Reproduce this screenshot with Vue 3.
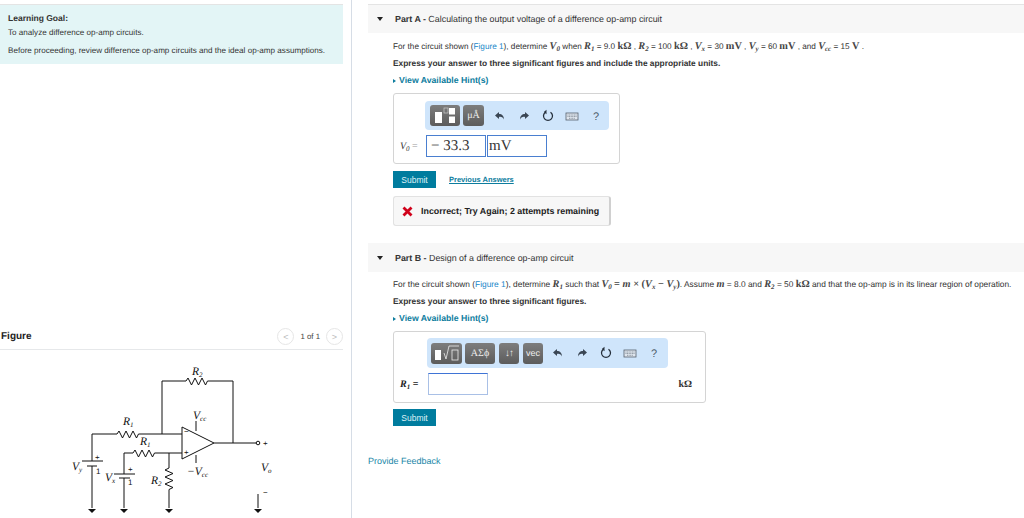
<template>
  <div class="page">
    <aside class="left">
      <section class="goal">
        <p class="goal-title">Learning Goal:</p>
        <p class="goal-one">To analyze difference op-amp circuits.</p>
        <p class="goal-two">Before proceeding, review difference op-amp circuits and the ideal op-amp assumptions.</p>
      </section>
      <div class="figure-head">
        <strong>Figure</strong>
        <div class="pager">
          <span class="pager-btn">&lt;</span>
          <span class="pager-text">1 of 1</span>
          <span class="pager-btn">&gt;</span>
        </div>
      </div>
      <svg class="circuit" width="220" height="163" viewBox="60 355 220 163">
        <g fill="none" stroke="#111" stroke-width="1">
          <path d="M162 434V381H186l2-3 3.500 7 3.500-7 3.500 7 3.500-7 3.500 7 2-4H233V443" />
          <path d="M92 461V434H117l2-3 3.500 7 3.500-7 3.500 7 3.500-7 3.500 7 2-4H182" />
          <path d="M124 474V453H133l2-3 3.500 7 3.500-7 3.500 7 3.500-7 3.500 7 2-4H182" />
          <path d="M169 453V468l-4 2 8 3.500-8 3.500 8 3.500-8 3.500 8 3.500-4 2V508" />
          <path d="M82 461H103M87 466H97M92 466V508" />
          <path d="M114 474H135M119 478H130M124 478V508" />
          <path d="M182 427V459L214 443Z" />
          <path d="M196 421V431M196 455V463M214 443H256" />
          <path d="M258 494V508" />
          <circle cx="258" cy="443" r="1.800" />
        </g>
        <g fill="#111">
          <path d="M88 509h8l-4 4zM120 509h8l-4 4zM165 509h8l-4 4zM254 509h8l-4 4z" />
        </g>
        <g class="serif-it">
          <text x="192" y="375">R<tspan class="sub" dy="2">2</tspan></text>
          <text x="123" y="425">R<tspan class="sub" dy="2">1</tspan></text>
          <text x="140" y="445">R<tspan class="sub" dy="2">1</tspan></text>
          <text x="151" y="484">R<tspan class="sub" dy="2">2</tspan></text>
          <text x="193" y="419">V<tspan class="sub" dy="2">cc</tspan></text>
          <text x="187" y="475">−V<tspan class="sub" dy="2">cc</tspan></text>
          <text x="72" y="470">V<tspan class="sub" dy="2">y</tspan></text>
          <text x="105" y="481">V<tspan class="sub" dy="2">x</tspan></text>
          <text x="261" y="471">V<tspan class="sub" dy="2">o</tspan></text>
        </g>
        <g class="marks">
          <text x="184" y="434">−</text>
          <text x="184" y="455">+</text>
          <text x="95" y="460">+</text>
          <text x="128" y="472">+</text>
          <text x="96" y="474">1</text>
          <text x="128" y="485">1</text>
          <text x="263" y="446">+</text>
          <text x="263" y="495">−</text>
        </g>
      </svg>
    </aside>

    <main class="right">
      <header class="part-head">
        <span class="caret"></span>
        <span><b>Part A -</b> Calculating the output voltage of a difference op-amp circuit</span>
      </header>
      <div class="part-body part-body-a">
        <p class="line">
          For the circuit shown (<span class="link">Figure 1</span>), determine
          <i class="m">V<sub>0</sub></i> when <i class="m">R<sub>1</sub></i> = 9.0 <span class="u">kΩ</span> ,
          <i class="m">R<sub>2</sub></i> = 100 <span class="u">kΩ</span> ,
          <i class="m">V<sub>x</sub></i> = 30 <span class="u">mV</span> ,
          <i class="m">V<sub>y</sub></i> = 60 <span class="u">mV</span> , and
          <i class="m">V<sub>cc</sub></i> = 15 <span class="u">V</span> .
        </p>
        <p class="line strong">Express your answer to three significant figures and include the appropriate units.</p>
        <p class="line hint"><span class="hint-caret"></span>View Available Hint(s)</p>

        <div class="answer answer-a">
          <div class="toolbar toolbar-a">
            <span class="tool tool-wide">
              <svg width="22" height="17" viewBox="0 0 22 17">
                <rect x="1" y="5" width="7" height="11" fill="#fff" />
                <rect x="10" y="1" width="4" height="5" fill="none" stroke="#ccc" stroke-width=".7" />
                <rect x="15" y="1" width="6" height="6.500" fill="#fff" />
                <rect x="15" y="9.500" width="6" height="6.500" fill="#fff" />
              </svg>
            </span>
            <span class="tool tool-unit">μÅ</span>
            <span class="icons icons-a">
              <svg v-for="i in icons" :key="i.id" width="14" height="14" viewBox="0 0 14 14" v-html="i.body"></svg>
            </span>
          </div>
          <div class="eq-row">
            <span class="eq-label"><i>V<sub>0</sub></i> <em>=</em></span>
            <span class="box box-value">− 33.3</span>
            <span class="box box-unit">mV</span>
          </div>
        </div>

        <div class="submit-row">
          <button class="submit">Submit</button>
          <span class="prev">Previous Answers</span>
        </div>

        <div class="feedback">
          <svg width="11" height="11" viewBox="0 0 11 11"><path d="M1.500 1.500 9.500 9.500M9.500 1.500 1.500 9.500" stroke="#d0021b" stroke-width="2.800" /></svg>
          <span>Incorrect; Try Again; 2 attempts remaining</span>
        </div>
      </div>

      <header class="part-head part-b">
        <span class="caret"></span>
        <span><b>Part B -</b> Design of a difference op-amp circuit</span>
      </header>
      <div class="part-body">
        <p class="line line-b">
          For the circuit shown (<span class="link">Figure 1</span>), determine
          <i class="m">R<sub>1</sub></i> such that <i class="m">V<sub>0</sub></i> <span class="u">= <i>m</i> × (<i>V<sub>x</sub></i> − <i>V<sub>y</sub></i>)</span>.
          Assume <i class="m">m</i> = 8.0 and <i class="m">R<sub>2</sub></i> = 50 <span class="u">kΩ</span>
          and that the op-amp is in its linear region of operation.
        </p>
        <p class="line strong">Express your answer to three significant figures.</p>
        <p class="line hint"><span class="hint-caret"></span>View Available Hint(s)</p>

        <div class="answer answer-b">
          <div class="toolbar toolbar-b">
            <span class="tool tool-root">
              <svg width="28" height="18" viewBox="0 0 28 18">
                <rect x="2" y="6" width="6" height="10" fill="#fff" />
                <path d="M11 9l2 6 3-13h10" fill="none" stroke="#eee" stroke-width=".8" />
                <rect x="19" y="6" width="6" height="10" fill="none" stroke="#eee" stroke-width=".8" />
              </svg>
            </span>
            <span class="tool tool-greek">ΑΣϕ</span>
            <span class="tool tool-arrows">↓↑</span>
            <span class="tool tool-vec">vec</span>
            <span class="icons icons-b">
              <svg v-for="i in icons" :key="i.id" width="14" height="14" viewBox="0 0 14 14" v-html="i.body"></svg>
            </span>
          </div>
          <div class="eq-row eq-row-b">
            <span class="eq-label-b"><i>R<sub>1</sub></i> =</span>
            <span class="box box-empty"></span>
            <span class="unit-b">kΩ</span>
          </div>
        </div>

        <div class="submit-row submit-row-b">
          <button class="submit">Submit</button>
        </div>
      </div>
      <p class="provide">Provide Feedback</p>
    </main>
  </div>
</template>

<script setup>
// toolbar icons are the same in both parts
const icons = [
  { id: 'undo', body: '<path d="M6 3 2 6.500 6 10V8c2.500-.5 4 .5 5 2.500 0-3.500-2-5.500-5-5.500z" fill="#3a4654"/>' },
  { id: 'redo', body: '<path d="M8 3l4 3.500L8 10V8c-2.500-.5-4 .5-5 2.500C3 7 5 5 8 5z" fill="#3a4654"/>' },
  { id: 'reset', body: '<path d="M9.500 3.200A4.500 4.500 0 1 1 4.500 3.200" fill="none" stroke="#26303c" stroke-width="1.300"/><path d="M5.500 .8v4.400L2.800 3z" fill="#26303c"/>' },
  { id: 'keys', body: '<rect x="1" y="4" width="12" height="7" fill="#dfe6ee" stroke="#55606c" stroke-width=".8"/><path d="M2.500 6h9M2.500 7.500h9M4 9.300h6" stroke="#6a7480" stroke-width=".7" stroke-dasharray="1 .6"/>' },
  { id: 'help', body: '<text x="7" y="11" text-anchor="middle" font-family="Liberation Sans" font-size="11" fill="#4a5664">?</text>' }
]
</script>

<style>
html, body {
  margin: 0;
  background: #fff;
  overflow: hidden;
}
</style>

<style scoped>
.page {
  display: grid;
  grid-template-columns: 352px 1fr;
  column-gap: 16px;
  width: 1024px;
  height: 518px;
  overflow: hidden;
  font-family: "Liberation Sans", Arial, sans-serif;
  font-size: 8.1px;
  text-rendering: geometricPrecision;
  color: #333;
}

p {
  margin: 0;
}

.left {
  width: 352px;
  height: 518px;
  box-sizing: border-box;
  border-right: 1px solid #d6dde6;
  padding-top: 4px;
}

.goal {
  width: 343px;
  height: 60px;
  box-sizing: border-box;
  border-top: 1px solid #e4e4e4;
  background: #e3f5f6;
  padding-left: 8px;
}

.goal-title {
  margin-top: 8px;
  line-height: 10px;
  font-size: 8.5px;
  font-weight: bold;
}

.goal-one {
  margin-top: 5px;
  line-height: 10px;
}

.goal-two {
  margin-top: 7px;
  line-height: 11px;
}

.figure-head {
  display: flex;
  justify-content: space-between;
  align-items: center;
  width: 343px;
  height: 26px;
  box-sizing: border-box;
  margin-top: 260px;
  padding-left: 1px;
  border-bottom: 1px solid #e6e8ea;
}

.figure-head strong {
  font-size: 10px;
  color: #222;
}

.pager {
  display: flex;
  align-items: center;
  gap: 6px;
}

.pager-btn {
  display: flex;
  align-items: center;
  justify-content: center;
  width: 15px;
  height: 15px;
  border: 1px solid #e6e6e6;
  border-radius: 50%;
  color: #bbb;
  font-size: 9px;
}

.pager-text {
  color: #444;
  font-size: 7.8px;
}

.circuit {
  display: block;
  margin: 5px 0 0 60px;
}

.serif-it text {
  font-family: "Liberation Serif", serif;
  font-style: italic;
  font-size: 11.5px;
  fill: #111;
}

.serif-it .sub {
  font-size: 7px;
}

.marks text {
  font-family: "Liberation Sans", sans-serif;
  font-size: 8px;
  fill: #111;
}

.right {
  padding-top: 4px;
  min-width: 0;
}

.part-head {
  display: flex;
  align-items: center;
  height: 28px;
  border-top: 1px solid #e4e4e4;
  background: #f7f7f7;
  padding-left: 9px;
  gap: 12px;
  font-size: 8.9px;
}

.part-head b {
  color: #333;
}

.part-b {
  margin-top: 17px;
  border-top-color: #f7f7f7;
}

.caret {
  width: 0;
  height: 0;
  border-left: 3.500px solid transparent;
  border-right: 3.500px solid transparent;
  border-top: 4px solid #222;
}

.part-body {
  padding-left: 25px;
}

.line {
  height: 17px;
  line-height: 17px;
  white-space: nowrap;
  font-size: 8.2px;
}

.part-body > .line:first-child {
  margin-top: 4px;
}

.part-body-a > .line:first-child {
  margin-top: 5px;
}

.line-b {
  font-size: 8.35px;
}

.strong {
  font-size: 8.35px;
  font-weight: bold;
}

.hint {
  display: flex;
  align-items: center;
  color: #0d7d9e;
  font-size: 8.7px;
  font-weight: bold;
}

.hint-caret {
  width: 0;
  height: 0;
  margin-right: 3px;
  border-top: 2.500px solid transparent;
  border-bottom: 2.500px solid transparent;
  border-left: 3px solid #0d7d9e;
}

.link {
  color: #1a87c9;
}

.m,
.u {
  font-family: "Liberation Serif", serif;
  font-size: 10.3px;
  font-weight: bold;
  color: #444;
}

.m sub,
.u sub,
.eq-label sub,
.eq-label-b sub {
  font-size: 7px;
  line-height: 0;
  vertical-align: -1.5px;
}

.answer {
  box-sizing: border-box;
  border: 1px solid #d4d4d4;
  border-radius: 3px;
  background: #fff;
}

.answer-a {
  width: 227px;
  height: 71px;
  margin-top: 4px;
  padding: 7px 0 0 31px;
}

.answer-b {
  width: 313px;
  height: 72px;
  margin-top: 4px;
  padding: 6px 0 0 33px;
}

.toolbar {
  display: flex;
  align-items: center;
  box-sizing: border-box;
  border-radius: 4px;
  background: #cfe5fb;
  padding-left: 5px;
  gap: 3px;
}

.toolbar-a {
  width: 184px;
  height: 29px;
}

.toolbar-b {
  width: 241px;
  height: 30px;
  padding-left: 4px;
}

.tool {
  display: flex;
  align-items: center;
  justify-content: center;
  height: 21px;
  border-radius: 3px;
  background: linear-gradient(#7d7d7d, #5c5c5c);
  color: #eee;
}

.tool-wide {
  width: 30px;
}

.tool-unit {
  width: 21px;
  font-family: "Liberation Serif", serif;
  font-size: 10px;
}

.tool-root {
  width: 31px;
}

.tool-greek {
  width: 30px;
  font-family: "Liberation Serif", serif;
  font-size: 10px;
}

.tool-arrows {
  width: 20px;
  margin-left: 1px;
  font-size: 10px;
  font-weight: bold;
  letter-spacing: -1px;
}

.tool-vec {
  width: 20px;
  margin-left: 1px;
  font-size: 9px;
}

.icons {
  display: flex;
  align-items: center;
  gap: 10px;
}

.icons-a {
  margin-left: 6px;
}

.icons-b {
  margin-left: 5px;
}

.eq-row {
  display: flex;
  align-items: center;
  margin-top: 5px;
  margin-left: -25px;
  gap: 1px;
}

.eq-label {
  width: 25px;
  font-family: "Liberation Serif", serif;
  font-size: 10px;
  color: #333;
}

.eq-label em {
  font-style: normal;
  color: #999;
}

.box {
  display: flex;
  align-items: center;
  box-sizing: border-box;
  height: 22px;
  border: 1px solid #4a7fd0;
  font-family: "Liberation Serif", serif;
  font-size: 15px;
  color: #333;
  padding-left: 4px;
}

.box-value {
  width: 60px;
}

.box-unit {
  width: 60px;
  padding-left: 1px;
}

.eq-row-b {
  margin-top: 5px;
  margin-left: -27px;
  gap: 0;
}

.eq-label-b {
  width: 28px;
  font-family: "Liberation Serif", serif;
  font-size: 10px;
  font-weight: bold;
  color: #222;
  white-space: pre;
}

.box-empty {
  width: 60px;
  border-color: #3f74d6 #a9c0e6 #a9c0e6 #a9c0e6;
}

.unit-b {
  margin-left: auto;
  margin-right: 13px;
  font-family: "Liberation Serif", serif;
  font-size: 10px;
  font-weight: bold;
  color: #333;
}

.submit-row {
  display: flex;
  align-items: center;
  margin-top: 7px;
  gap: 13px;
}

.submit-row-b {
  margin-top: 6px;
}

.submit {
  width: 43px;
  height: 17px;
  border: 0;
  border-radius: 0;
  padding: 0;
  background: #007c9e;
  color: #dff2f7;
  font-family: "Liberation Sans", sans-serif;
  font-size: 8.500px;
}

.prev {
  color: #0d7d9e;
  font-weight: bold;
  font-size: 7.500px;
  text-decoration: underline;
}

.feedback {
  display: flex;
  align-items: center;
  box-sizing: border-box;
  gap: 8px;
  width: 218px;
  height: 30px;
  margin-top: 8px;
  padding-left: 8px;
  border: 1px solid #e2e2e2;
  border-right: 2px solid #d0d0d0;
  border-radius: 3px;
  background: #f7f7f7;
  font-size: 8.9px;
  font-weight: bold;
  color: #222;
}

.provide {
  margin-top: 30px;
  font-size: 9px;
  color: #1a87a8;
}
</style>
